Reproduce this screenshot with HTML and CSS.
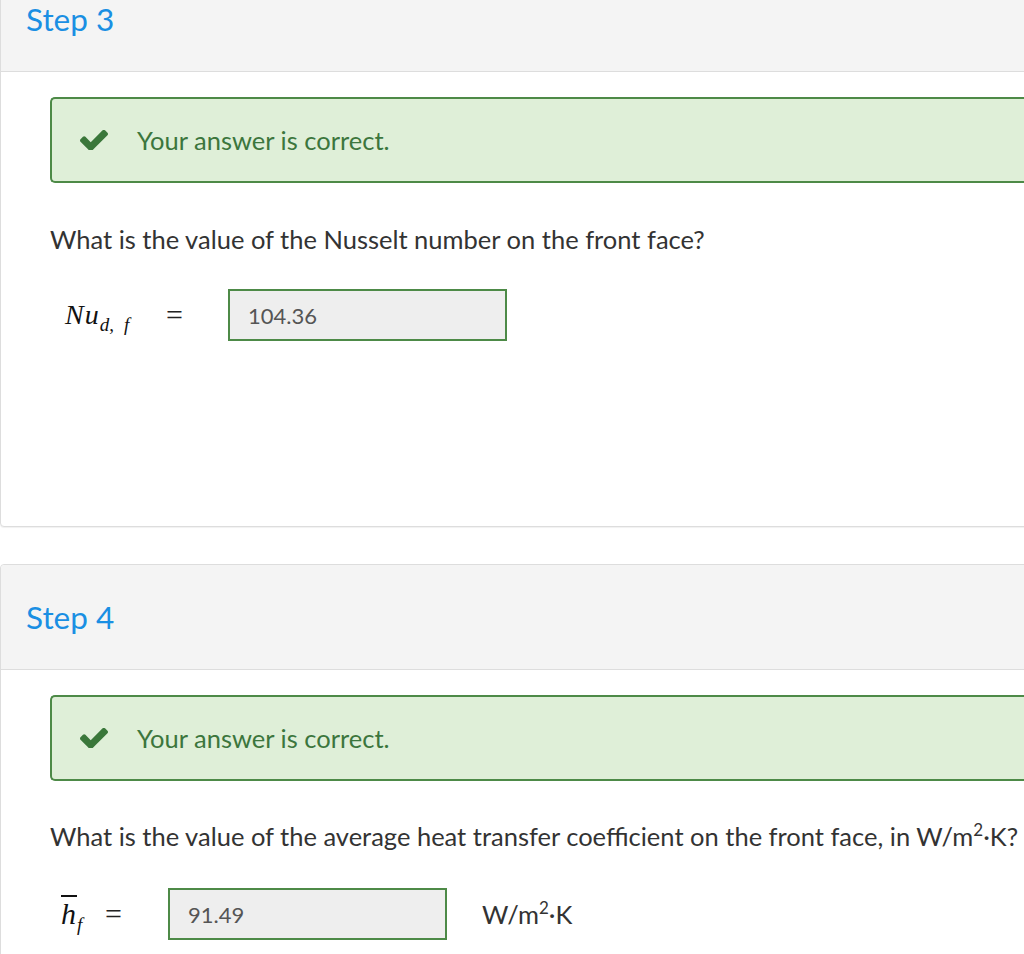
FILE: index.html
```html
<!DOCTYPE html>
<html lang="en">
<head>
<meta charset="utf-8">
<title>Steps</title>
<link rel="stylesheet" href="styles.css">
</head>
<body>
<div class="page">
  <section class="card card-first">
    <div class="card-header"><h2 class="step-title">Step 3</h2></div>
    <div class="card-body body-first">
      <div class="alert">
        <svg class="check" viewBox="121 362 1550 1070" aria-hidden="true"><path d="M1671 566q0 40-28 68l-724 724-136 136q-28 28-68 28t-68-28l-136-136-362-362q-28-28-28-68t28-68l136-136q28-28 68-28t68 28l294 295 656-657q28-28 68-28t68 28l136 136q28 28 28 68z"/></svg>
        <span class="alert-text">Your answer is correct.</span>
      </div>
      <p class="question">What is the value of the Nusselt number on the front face?</p>
      <div class="answer-row row-nu">
        <span class="math nu"><i class="mv">Nu</i><sub class="msub"><i>d</i>,<span class="thin"></span><i>f</i></sub></span>
        <span class="eq eq-nu">=</span>
        <div class="answer-box">104.36</div>
      </div>
    </div>
  </section>

  <section class="card">
    <div class="card-header"><h2 class="step-title">Step 4</h2></div>
    <div class="card-body body-last">
      <div class="alert">
        <svg class="check" viewBox="121 362 1550 1070" aria-hidden="true"><path d="M1671 566q0 40-28 68l-724 724-136 136q-28 28-68 28t-68-28l-136-136-362-362q-28-28-28-68t28-68l136-136q28-28 68-28t68 28l294 295 656-657q28-28 68-28t68 28l136 136q28 28 28 68z"/></svg>
        <span class="alert-text">Your answer is correct.</span>
      </div>
      <p class="question question-2">What is the value of the average heat transfer coefficient on the front face, in W/m<sup class="sup">2</sup>·K?</p>
      <div class="answer-row row-h">
        <span class="math hbar"><i class="mv overline">h</i><sub class="msub"><i>f</i></sub></span>
        <span class="eq eq-h">=</span>
        <div class="answer-box">91.49</div>
        <span class="unit">W/m<sup class="sup">2</sup>·K</span>
      </div>
    </div>
  </section>
</div>
</body>
</html>
```

FILE: styles.css
```css
html, body {
  margin: 0;
  padding: 0;
  overflow: hidden;
  background: #ffffff;
}

body {
  font-family: Lato, "Open Sans", "Liberation Sans", sans-serif;
  color: #333333;
}

.page {
  width: 1100px;
}

.card {
  border: 1px solid #dddddd;
  border-radius: 4px;
  background: #ffffff;
  box-shadow: 0 1px 1px rgba(0, 0, 0, 0.06);
  margin-bottom: 37px;
}

.card-first {
  margin-top: -34px;
}

.card-header {
  background: #f4f4f4;
  border-bottom: 1px solid #dddddd;
  height: 104px;
  padding-left: 25px;
  display: flex;
  align-items: center;
  border-radius: 4px 4px 0 0;
}

.step-title {
  margin: 0;
  padding-bottom: 1px;
  font-size: 31.5px;
  font-weight: 400;
  color: #1a8fe3;
  line-height: 38px;
}

.card-body {
  padding: 25px 0 0 49px;
}

.body-first {
  padding-bottom: 185px;
}

.body-last {
  padding-bottom: 60px;
}

.alert {
  box-sizing: border-box;
  height: 86px;
  border: 2px solid #4d8a47;
  border-right: none;
  border-radius: 5px 0 0 5px;
  background: #dfefd8;
  display: flex;
  align-items: center;
  padding-left: 28px;
}

.check {
  width: 28px;
  height: 20px;
  fill: #3a773a;
  margin-right: 29px;
}

.alert-text {
  font-size: 25.5px;
  color: #3c763d;
}

.question {
  margin: 41px 0 0 0;
  font-size: 25.5px;
  line-height: 30px;
  color: #333333;
  white-space: nowrap;
}

.question-2 {
  margin-top: 40px;
}

.sup {
  font-size: 17px;
  line-height: 0;
  vertical-align: 10px;
}

.answer-row {
  display: flex;
  align-items: center;
  margin-top: 35px;
}

.row-h {
  margin-top: 37px;
}

.math {
  font-family: "Liberation Serif", "DejaVu Serif", serif;
  color: #111111;
  font-size: 28px;
  white-space: nowrap;
}

.mv {
  font-style: italic;
  font-weight: 400;
  letter-spacing: 1px;
}

.msub {
  font-size: 19px;
  vertical-align: -7px;
  line-height: 0;
  white-space: nowrap;
}

.thin {
  display: inline-block;
  width: 10px;
}

.nu {
  margin-left: 15px;
  width: 80px;
}

.hbar {
  margin-left: 11px;
  width: 36px;
}

.overline {
  font-size: 30px;
  text-decoration: overline;
  text-decoration-thickness: 1.5px;
}

.eq {
  font-family: "Liberation Serif", serif;
  font-size: 30px;
  color: #222222;
}

.eq-nu {
  margin-left: 21px;
  margin-right: 45px;
}

.eq-h {
  margin-left: 8px;
  margin-right: 46px;
}

.answer-box {
  box-sizing: border-box;
  width: 279px;
  height: 52px;
  border: 2px solid #4d8a47;
  background: #eeeeee;
  display: flex;
  align-items: center;
  padding-left: 18px;
  font-size: 22px;
  color: #555555;
}

.unit {
  margin-left: 35px;
  font-size: 25.5px;
  color: #333333;
}
```
